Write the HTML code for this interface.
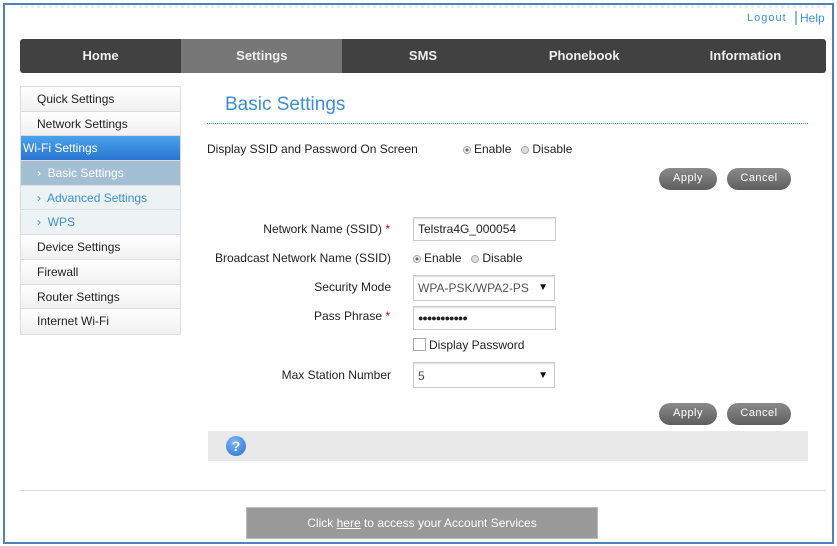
<!DOCTYPE html><html><head><style>
*{margin:0;padding:0;box-sizing:border-box}
body{width:837px;height:546px;background:#fff;font-family:"Liberation Sans",sans-serif;font-size:12px;color:#222;position:relative;overflow:hidden}
.a{position:absolute}
.frame{left:3px;top:3px;width:831px;height:541px;border:2px solid #4f81bd}
.nav{left:20px;top:39px;width:806px;height:34px;background:#414141;border-radius:3px;display:flex}
.nav div{flex:1;color:#eee;font-weight:bold;font-size:13px;text-align:center;line-height:34px}
.nav .on{background:#777}
.side{left:20px;top:86px;width:161px;border:1px solid #ddd}
.side div{height:24.7px;line-height:24px;padding-left:16px;border-bottom:1px solid #ddd;background:linear-gradient(#fff,#f1f1f1);font-size:12px}
.side .wifi{background:linear-gradient(#4aa3ee,#2a74cf);color:#fff;padding-left:2px}
.side .sub{background:#edf2f5;color:#3b8fd8;padding-left:16px}
.side .sel{background:#a2bfd3;color:#fff}
.lbl{text-align:right;width:190px;left:200px}
.in{border:1px solid #ccc;box-shadow:inset 0 1px 1px #ddd;height:24px;line-height:22px;padding-left:4px;background:#fff}
.btn{height:22px;width:58px;border-radius:11px;background:linear-gradient(#8a8a8a,#5e5e5e);color:#fff;text-align:center;line-height:21px;font-size:11px;letter-spacing:.5px}
.r{display:inline-block;width:8px;height:8px;border-radius:50%;border:1px solid #aaa;background:#ddd;vertical-align:-1px;margin-right:3px}
.r.c{background:radial-gradient(#666 30%,#eee 40%)}
</style></head><body>
<div class="a frame"></div>
<div class="a" style="left:20px;top:5px;width:806px;height:4px;border-top:3px dotted #eee"></div>
<div class="a" style="left:747px;top:12px;color:#3b8fd8;font-size:11px;letter-spacing:1px">Logout</div>
<div class="a" style="left:795px;top:11px;width:2px;height:14px;background:#8ab8e8"></div>
<div class="a" style="left:800px;top:11px;color:#3b8fd8;font-size:12px">Help</div>
<div class="a nav"><div>Home</div><div class="on">Settings</div><div>SMS</div><div>Phonebook</div><div>Information</div></div>
<div class="a side">
<div>Quick Settings</div><div>Network Settings</div><div class="wifi">Wi-Fi Settings</div>
<div class="sub sel">›&nbsp; Basic Settings</div><div class="sub">›&nbsp; Advanced Settings</div><div class="sub">›&nbsp; WPS</div>
<div>Device Settings</div><div>Firewall</div><div>Router Settings</div><div style="border-bottom:0">Internet Wi-Fi</div></div>
<div class="a" style="left:225px;top:94px;font-size:19px;color:#3b8fd8">Basic Settings</div>
<div class="a" style="left:207px;top:123px;width:601px;border-top:1px dotted #3b8fd8"></div>
<div class="a" style="left:207px;top:142px">Display SSID and Password On Screen</div>
<div class="a" style="left:463px;top:142px"><span class="r c"></span>Enable &nbsp; <span class="r"></span>Disable</div>
<div class="a btn" style="left:659px;top:168px">Apply</div>
<div class="a btn" style="left:727px;top:168px;width:64px">Cancel</div>
<div class="a lbl" style="top:222px">Network Name (SSID) <span style="color:#c00">*</span></div>
<div class="a in" style="left:413px;top:217px;width:143px">Telstra4G_000054</div>
<div class="a lbl" style="top:251px;left:200px;width:191px">Broadcast Network Name (SSID)</div>
<div class="a" style="left:413px;top:251px"><span class="r c"></span>Enable &nbsp; <span class="r"></span>Disable</div>
<div class="a lbl" style="top:280px;width:191px">Security Mode</div>
<div class="a in" style="left:413px;top:275px;width:142px;height:26px;line-height:24px;color:#555">WPA-PSK/WPA2-PS<span style="position:absolute;right:6px;color:#111;font-size:10px">▼</span></div>
<div class="a lbl" style="top:309px">Pass Phrase <span style="color:#c00">*</span></div>
<div class="a in" style="left:413px;top:306px;width:143px;font-size:9px;letter-spacing:-1px">●●●●●●●●●●●</div>
<div class="a" style="left:413px;top:338px;width:13px;height:13px;border:1px solid #aaa"></div>
<div class="a" style="left:429px;top:338px">Display Password</div>
<div class="a lbl" style="top:368px;width:191px">Max Station Number</div>
<div class="a in" style="left:413px;top:362px;width:142px;height:26px;line-height:26px;color:#555">5<span style="position:absolute;right:6px;color:#111;font-size:10px">▼</span></div>
<div class="a btn" style="left:659px;top:403px">Apply</div>
<div class="a btn" style="left:727px;top:403px;width:64px">Cancel</div>
<div class="a" style="left:208px;top:431px;width:600px;height:30px;background:#e9e9e9"></div>
<div class="a" style="left:226px;top:436px;width:20px;height:20px;border-radius:50%;background:radial-gradient(circle at 40% 30%,#7ab8f0,#2a6fd0);color:#fff;font-weight:bold;font-size:14px;text-align:center;line-height:20px">?</div>
<div class="a" style="left:20px;top:490px;width:806px;border-top:1px solid #ddd"></div>
<div class="a" style="left:246px;top:507px;width:352px;height:32px;background:#999;border:1px solid #bbb;color:#fff;text-align:center;line-height:30px;font-size:12px">Click <u>here</u> to access your Account Services</div>
</body></html>
